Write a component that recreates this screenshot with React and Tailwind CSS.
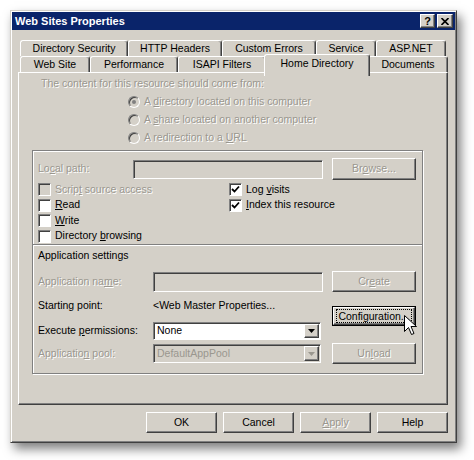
import React from 'react'

// classic 3D edges
const raised = 'border border-t-white border-l-white border-r-[#404040] border-b-[#404040] shadow-[inset_-1px_-1px_0_#808080]'
const sunken = 'border border-t-[#808080] border-l-[#808080] border-r-white border-b-white shadow-[inset_1px_1px_0_#404040]'
const dim = 'text-[#9a978f] [text-shadow:1px_1px_0_#fff]'

const topTabs = [
  { label: 'Directory Security', w: 'w-[108px]' },
  { label: 'HTTP Headers', w: 'w-[94px]' },
  { label: 'Custom Errors', w: 'w-[94px]' },
  { label: 'Service', w: 'w-[60px]' },
  { label: 'ASP.NET', w: 'w-[70px]' },
]

const frontTabs = [
  { label: 'Web Site', w: 'w-[70px]' },
  { label: 'Performance', w: 'w-[88px]' },
  { label: 'ISAPI Filters', w: 'w-[88px]' },
  { label: 'Home Directory', w: 'w-[100px]', active: true },
  { label: 'Documents', w: 'w-[80px]' },
]

function Tab({ label, w, active }) {
  if (active) {
    return (
      <div className={`${w} relative z-10 -mx-[2px] -mt-[2px] h-[19px] box-content px-[2px] flex items-start pt-[2px] justify-center bg-[#d4d0c8] border-t border-l border-t-white border-l-white border-r border-r-[#404040] rounded-t-[3px] shadow-[inset_-1px_0_0_#808080]`}>
        <span className="leading-[13px]">{label}</span>
      </div>
    )
  }
  return (
    <div className={`${w} h-[16px] flex items-center justify-center border-t border-l border-t-white border-l-white border-r border-r-[#404040] rounded-t-[3px] shadow-[inset_-1px_0_0_#808080]`}>
      <span className="leading-[13px]">{label}</span>
    </div>
  )
}

function Button({ children, w = 'w-[84px]', h = 'h-[21px]', disabled, def }) {
  if (def) {
    return (
      <div className={`${w} ${h} border border-black flex`}>
        <div className={`flex-1 ${raised} flex items-center justify-center`}>
          <span className="border border-dotted border-black px-[1px] leading-[12px]">{children}</span>
        </div>
      </div>
    )
  }
  return (
    <div className={`${w} ${h} ${raised} flex items-center justify-center ${disabled ? dim : ''}`}>
      {children}
    </div>
  )
}

function Check({ checked, disabled, children }) {
  return (
    <div className="flex items-center h-full gap-[4px]">
      <div className={`w-[13px] h-[13px] ${sunken} ${disabled ? 'bg-[#d4d0c8]' : 'bg-white'} flex items-center justify-center`}>
        {checked && (
          <svg width="9" height="9" viewBox="0 0 9 9">
            <path d="M1 4 L3.5 6.5 L8 1.5" stroke="#000" strokeWidth="1.8" fill="none" />
          </svg>
        )}
      </div>
      <span className={disabled ? dim : ''}>{children}</span>
    </div>
  )
}

function Radio({ checked, children }) {
  return (
    <div className="flex items-center h-[18px] gap-[4px]">
      <div className="w-[12px] h-[12px] rounded-full border border-t-[#808080] border-l-[#808080] border-r-white border-b-white bg-[#d4d0c8] shadow-[inset_1px_1px_0_#404040] flex items-center justify-center">
        {checked && <div className="w-[4px] h-[4px] rounded-full bg-[#808080]" />}
      </div>
      <span className={dim}>{children}</span>
    </div>
  )
}

function Select({ value, disabled, h }) {
  return (
    <div className={`w-[168px] ${h} ${sunken} ${disabled ? 'bg-[#d4d0c8]' : 'bg-white'} flex items-center p-[1px]`}>
      <span className={`flex-1 pl-[2px] ${disabled ? 'text-[#9a978f]' : ''}`}>{value}</span>
      <div className={`w-[15px] h-full ${raised} bg-[#d4d0c8] flex items-center justify-center`}>
        <svg width="7" height="4" viewBox="0 0 7 4">
          <path d="M0 0 H7 L3.5 4 Z" fill={disabled ? '#9a978f' : '#000'} />
        </svg>
      </div>
    </div>
  )
}

function Cursor() {
  return (
    <svg className="absolute left-[72px] top-[9px]" width="13" height="21" viewBox="0 0 13 21">
      <path d="M0.5 0.5 V16.5 L4.5 12.5 L7.5 19.5 L10 18.5 L7 11.5 H12.5 Z" fill="#fff" stroke="#000" strokeWidth="1" strokeLinejoin="miter" />
    </svg>
  )
}

export default function App() {
  return (
    <div className="w-[474px] h-[460px] bg-white pt-[10px] pl-[10px] font-['Liberation_Sans',Arial,sans-serif] text-[10.5px] text-black">
      <div className="w-[447px] h-[433px] bg-[#d4d0c8] border border-t-[#d4d0c8] border-l-[#d4d0c8] border-r-[#404040] border-b-[#404040] p-[1px] shadow-[inset_1px_1px_0_#fff,inset_-1px_-1px_0_#808080,4px_6px_10px_rgba(0,0,0,0.5)]">
        {/* title bar */}
        <div className="h-[18px] bg-[#0a246a] flex items-center pl-[3px] pr-[2px]">
          <span className="flex-1 text-white font-bold text-[11px]">Web Sites Properties</span>
          <div className={`w-[15px] h-[14px] ${raised} bg-[#d4d0c8] flex items-center justify-center font-bold text-[11px] leading-none`}>?</div>
          <div className={`w-[16px] h-[14px] ml-[2px] ${raised} bg-[#d4d0c8] flex items-center justify-center`}>
            <svg width="8" height="7" viewBox="0 0 8 7">
              <path d="M0.5 0 L7.5 7 M7.5 0 L0.5 7" stroke="#000" strokeWidth="1.6" />
            </svg>
          </div>
        </div>

        {/* tabs */}
        <div className="mt-[10px] ml-[8px]">
          <div className="flex h-[16px]">
            {topTabs.map(t => <Tab key={t.label} {...t} />)}
          </div>
          <div className="flex h-[16px] items-start">
            {frontTabs.map(t => <Tab key={t.label} {...t} />)}
          </div>
        </div>

        {/* page */}
        <div className={`ml-[6px] w-[430px] h-[333px] ${raised}`}>
          <div className={`mt-[4px] h-[13px] leading-[13px] pl-[22px] ${dim}`}>The content for this resource should come from:</div>
          <div className="mt-[3px] pl-[109px]">
            <Radio checked>A <u>d</u>irectory located on this computer</Radio>
            <Radio>A <u>s</u>hare located on another computer</Radio>
            <Radio>A redirection to a <u>U</u>RL</Radio>
          </div>

          <div className="mt-[3px] ml-[13px] w-[391px] h-[224px] border border-[#808080] shadow-[inset_1px_1px_0_#fff,1px_1px_0_#fff]">
            <div className="mt-[7px] h-[22px] pl-[5px] flex items-center">
              <span className={`w-[95px] ${dim}`}>Lo<u>c</u>al path:</span>
              <div className={`w-[190px] h-[19px] ${sunken} bg-[#d4d0c8]`} />
              <div className="ml-[9px]">
                <Button h="h-[22px]" disabled>Br<u>o</u>wse...</Button>
              </div>
            </div>

            <div className="mt-[2px] pl-[5px] flex">
              <div className="w-[191px]">
                <div className="h-[15.5px]"><Check disabled>Scrip<u>t</u> source access</Check></div>
                <div className="h-[15.5px]"><Check><u>R</u>ead</Check></div>
                <div className="h-[15.5px]"><Check><u>W</u>rite</Check></div>
                <div className="h-[15.5px]"><Check>Directory <u>b</u>rowsing</Check></div>
              </div>
              <div>
                <div className="h-[15.5px]"><Check checked>Log <u>v</u>isits</Check></div>
                <div className="h-[15.5px]"><Check checked><u>I</u>ndex this resource</Check></div>
              </div>
            </div>

            <div className="h-[2px] border-t border-t-[#808080] border-b border-b-white" />
            <div className="mt-[2px] h-[14px] leading-[14px] pl-[5px]">Application settings</div>

            <div className="flex">
              <div className="pl-[5px] w-[290px]">
                <div className="mt-[10px] h-[20px] flex items-center">
                  <span className={`w-[115px] ${dim}`}>Application na<u>m</u>e:</span>
                  <div className={`w-[170px] h-[20px] ${sunken} bg-[#d4d0c8]`} />
                </div>
                <div className="mt-[7px] h-[14px] flex items-center">
                  <span className="w-[115px]">Starting point:</span>
                  <span>&lt;Web Master Properties...</span>
                </div>
                <div className="mt-[9px] h-[18px] flex items-center">
                  <span className="w-[115px]">Execute <u>p</u>ermissions:</span>
                  <Select value="None" h="h-[18px]" />
                </div>
                <div className="mt-[4px] h-[19px] flex items-center">
                  <span className={`w-[115px] ${dim}`}>Applicatio<u>n</u> pool:</span>
                  <Select value="DefaultAppPool" h="h-[19px]" disabled />
                </div>
              </div>
              <div className="ml-[9px]">
                <div className="mt-[9px]"><Button disabled>Cr<u>e</u>ate</Button></div>
                <div className="mt-[14px] relative">
                  <Button h="h-[20px]" def>Configuration...</Button>
                  <Cursor />
                </div>
                <div className="mt-[17px]"><Button disabled>Un<u>l</u>oad</Button></div>
              </div>
            </div>
          </div>
        </div>

        {/* dialog buttons */}
        <div className="mt-[7px] mr-[7px] flex justify-end gap-[6px]">
          <Button w="w-[71px]">OK</Button>
          <Button w="w-[71px]">Cancel</Button>
          <Button w="w-[71px]" disabled><u>A</u>pply</Button>
          <Button w="w-[71px]">Help</Button>
        </div>
      </div>
    </div>
  )
}
